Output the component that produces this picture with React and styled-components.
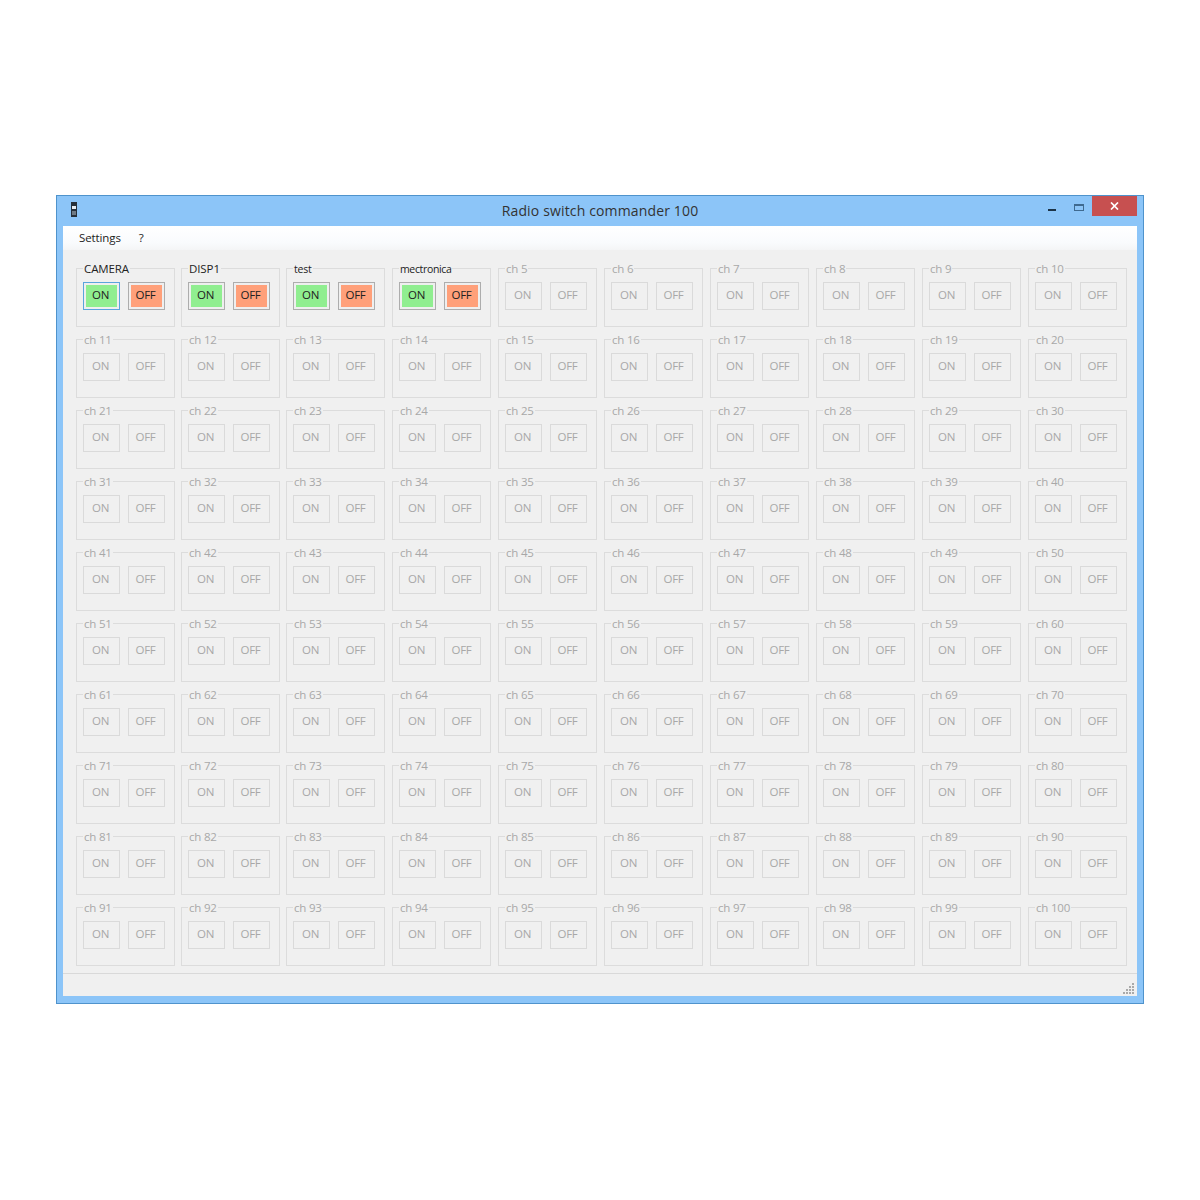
import React from "react";
import styled, { createGlobalStyle } from "styled-components";

const GlobalStyle = createGlobalStyle`
  html, body {
    margin: 0;
    padding: 0;
    background: #fff;
  }
  body {
    font-family: "Open Sans", "Noto Sans", sans-serif;
  }
`;

const Page = styled.div`
  width: 1200px;
  height: 1200px;
  padding: 195px 56px 0;
  box-sizing: border-box;
`;

const Window = styled.div`
  width: 1088px;
  height: 809px;
  box-sizing: border-box;
  border: 1px solid #4f93cc;
  background: #8cc5f8;
  padding: 0 6px 7px;
  display: flex;
  flex-direction: column;
`;

const TitleBar = styled.div`
  height: 30px;
  flex: none;
  display: grid;
  grid-template-columns: 1fr auto 1fr;
  align-items: start;
`;

const AppIcon = styled.svg`
  display: block;
  margin: 6px 0 0 8px;
`;

const Title = styled.div`
  font-size: 14px;
  line-height: 20px;
  letter-spacing: 0.15px;
  margin-top: 5px;
  color: #333;
`;

const Controls = styled.div`
  display: flex;
  justify-content: flex-end;
  align-items: flex-start;
`;

const ControlIcon = styled.svg`
  display: block;
  margin: ${p => p.$margin};
`;

const CloseButton = styled.div`
  width: 45px;
  height: 20px;
  background: #c75050;
  display: flex;
  align-items: center;
  justify-content: center;
`;

const Client = styled.div`
  flex: 1;
  min-height: 0;
  background: #f0f0f0;
  display: flex;
  flex-direction: column;
`;

const MenuBar = styled.div`
  height: 24px;
  flex: none;
  display: flex;
  align-items: center;
  padding: 0 0 2px 16px;
  box-sizing: border-box;
  gap: 18px;
  background: linear-gradient(#ffffff, #f9fbfd 70%, #f4f5f6);
  font-size: 11.5px;
  letter-spacing: -0.1px;
  color: #222;
`;

const Grid = styled.div`
  flex: 1;
  display: grid;
  grid-template-columns: 105px 105px 106px 106px 106px 106px 106px 106px 106px 99px;
  grid-auto-rows: 71px;
  align-content: start;
  padding: 10px 0 0 13px;
`;

const Group = styled.fieldset`
  width: 99px;
  height: 67px;
  margin: 0;
  padding: 0 0 0 6px;
  box-sizing: border-box;
  border: 1px solid #dcdcdc;
  min-inline-size: 0;
`;

const GroupLabel = styled.legend`
  position: relative;
  top: 1px;
  padding: 0 1px;
  font-size: ${p => p.$size};
  letter-spacing: ${p => p.$spacing};
  line-height: 16px;
  color: ${p => (p.$active ? "#222" : "#a8a8a8")};
`;

const Buttons = styled.div`
  display: flex;
  gap: 8px;
  margin-top: 6px;
`;

const SwitchButton = styled.div`
  width: 37px;
  height: 28px;
  box-sizing: border-box;
  padding: 0 2px 3px 0;
  display: flex;
  align-items: center;
  justify-content: center;
  font-size: 11.5px;
  letter-spacing: -0.2px;
  color: ${p => (p.$active ? "#222" : "#a8a8a8")};
  border: 1px solid ${p => (p.$focus ? "#5aa5dc" : p.$active ? "#adadad" : "#dadada")};
  background: ${p => (p.$active ? p.$color : "#f0f0f0")};
  box-shadow: ${p => (p.$active ? "inset 0 0 0 2px #efefef" : "none")};
`;

const StatusBar = styled.div`
  height: 22px;
  flex: none;
  border-top: 1px solid #d9d9d9;
  display: flex;
  justify-content: flex-end;
  align-items: flex-end;
`;

const GripDot = styled.svg`
  display: block;
  margin: 0 3px 2px 0;
`;

const labels = {
  1: { text: "CAMERA", size: "11.5px", spacing: "-0.1px" },
  2: { text: "DISP1", size: "11.5px", spacing: "-0.1px" },
  3: { text: "test", size: "10.5px", spacing: "-0.2px" },
  4: { text: "mectronica", size: "10.5px", spacing: "-0.35px" }
};
const channels = Array.from({ length: 100 }, (_, i) => i + 1);
const grip = [[9, 0], [6, 3], [9, 3], [3, 6], [6, 6], [9, 6], [0, 9], [3, 9], [6, 9], [9, 9]];

export default function App() {
  return (
    <Page>
      <GlobalStyle />
      <Window>
        <TitleBar>
          <AppIcon width="6" height="15" viewBox="0 0 6 15">
            <rect width="6" height="15" fill="#26303a" />
            <rect x="1" y="4" width="4" height="3" fill="#e8edf2" />
            <rect x="1" y="9" width="4" height="4" fill="#6f7a85" />
          </AppIcon>
          <Title>Radio switch commander 100</Title>
          <Controls>
            <ControlIcon width="8" height="2" $margin="13px 18px 0 0" viewBox="0 0 8 2">
              <rect width="8" height="2" fill="#1c3347" />
            </ControlIcon>
            <ControlIcon width="10" height="7" $margin="8px 8px 0 0" viewBox="0 0 10 7">
              <rect x="0.5" y="0.5" width="9" height="6" fill="none" stroke="#3f6a90" />
              <rect x="0" y="0" width="10" height="2" fill="#3f6a90" />
            </ControlIcon>
            <CloseButton>
              <svg width="9" height="8" viewBox="0 0 9 8">
                <path d="M1 0.5 L8 7.5 M8 0.5 L1 7.5" stroke="#fff" strokeWidth="1.7" />
              </svg>
            </CloseButton>
          </Controls>
        </TitleBar>
        <Client>
          <MenuBar>
            <span>Settings</span>
            <span>?</span>
          </MenuBar>
          <Grid>
            {channels.map(n => {
              const label = labels[n];
              return (
                <Group key={n}>
                  <GroupLabel
                    $active={Boolean(label)}
                    $size={label ? label.size : "11.5px"}
                    $spacing={label ? label.spacing : "-0.2px"}
                  >
                    {label ? label.text : `ch ${n}`}
                  </GroupLabel>
                  <Buttons>
                    <SwitchButton $active={Boolean(label)} $focus={n === 1} $color="#90ee90">ON</SwitchButton>
                    <SwitchButton $active={Boolean(label)} $color="#ffa07a">OFF</SwitchButton>
                  </Buttons>
                </Group>
              );
            })}
          </Grid>
          <StatusBar>
            <GripDot width="11" height="11" viewBox="0 0 11 11">
              {grip.map(([x, y]) => (
                <rect key={`${x}-${y}`} x={x} y={y} width="2" height="2" fill="#a9a9a9" />
              ))}
            </GripDot>
          </StatusBar>
        </Client>
      </Window>
    </Page>
  );
}
